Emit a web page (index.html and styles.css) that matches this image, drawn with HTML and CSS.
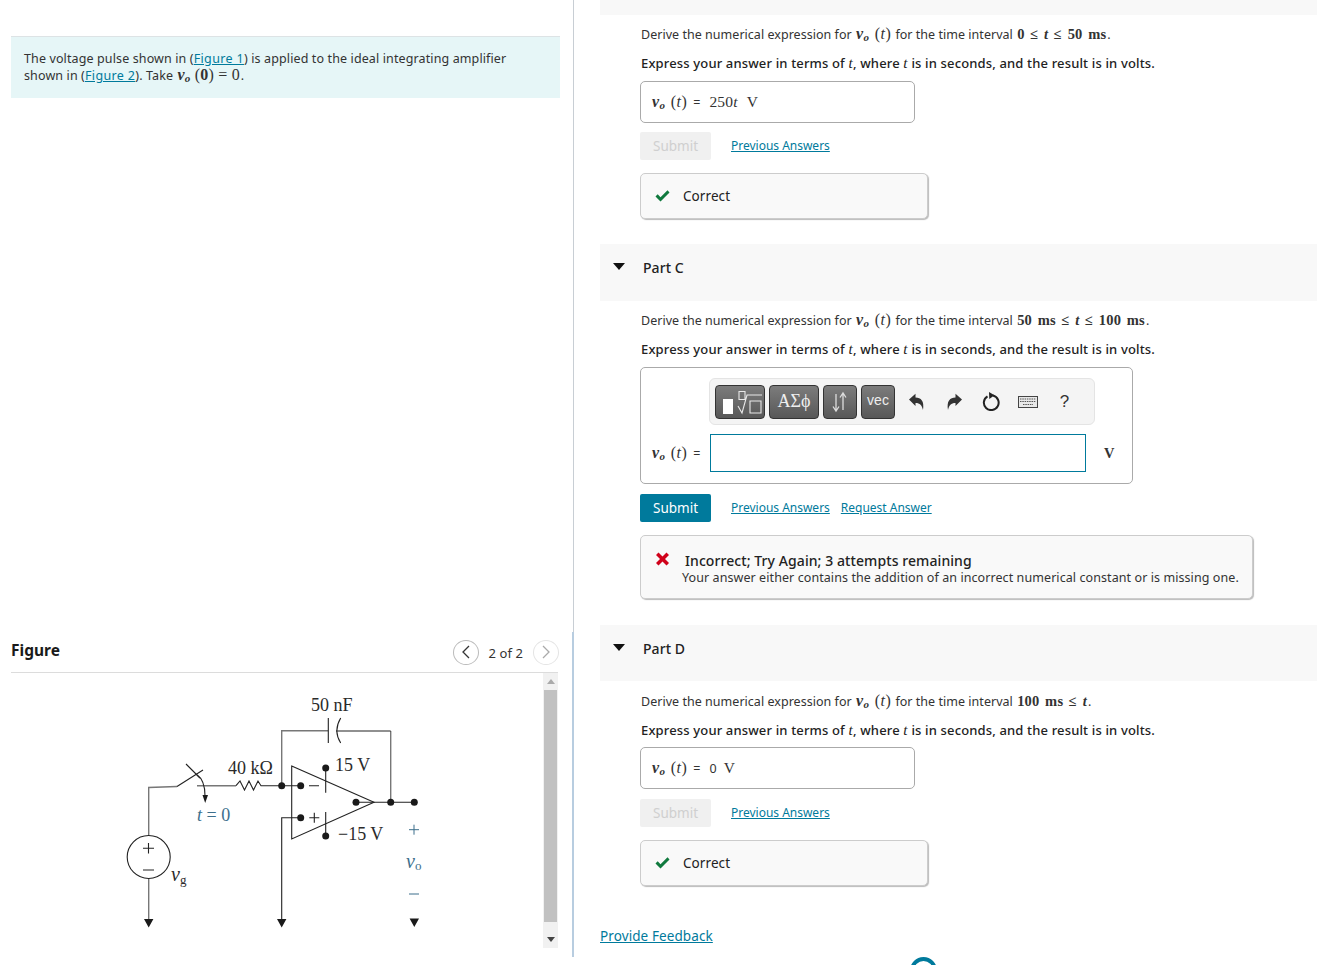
FILE: index.html
```html
<!DOCTYPE html>
<html lang="en">
<head>
<meta charset="utf-8">
<title>Integrating amplifier</title>
<link rel="stylesheet" href="styles.css">
</head>
<body>
<div class="page">
  <aside class="left">
    <div class="statement">
      <div class="intro">The voltage pulse shown in (<a href="#">Figure 1</a>) is applied to the ideal integrating amplifier<br>shown in (<a href="#">Figure 2</a>). Take <span class="m"><i class="v">v<sub>o</sub></i> (<b>0</b>) = 0</span>.</div>
    </div>
    <div class="figure">
      <div class="fig-head">
        <h2>Figure</h2>
        <div class="pager">
          <span class="round"><svg width="10" height="14" viewBox="0 0 10 14"><path d="M8 1 L2 7 L8 13" fill="none" stroke="#333" stroke-width="1.3"/></svg></span>
          <span class="count">2 of 2</span>
          <span class="round off"><svg width="10" height="14" viewBox="0 0 10 14"><path d="M2 1 L8 7 L2 13" fill="none" stroke="#aaa" stroke-width="1.3"/></svg></span>
        </div>
      </div>
      <div class="fig-view">
        <svg class="circuit" width="532" height="275" viewBox="11 673 532 275">
          <g fill="none" stroke="#777" stroke-width="1.4">
            <path d="M148.7 835V787.5L177 786.5"/>
            <path d="M197 785.7H236"/>
            <path d="M281.7 785.7V730.7H328"/>
            <path d="M390.7 802V731"/>
            <path d="M148.7 879V920"/>
          </g>
          <g fill="none" stroke="#222" stroke-width="1.1">
            <path d="M177 786.5L203 770M186 764L200 778"/>
            <path d="M197 775Q205 780 205 796"/>
            <path d="M236 785.7L240 781L244.500 790L249 781L253.500 790L258 781L261 785.700H300.700"/>
            <path d="M328.300 718V743M340.700 718Q333 730.700 340.700 743M336 731H390.700"/>
            <path d="M291.700 766L374 802.300L291.700 839Z"/>
            <path d="M325.700 768V792.700M325.700 812V836"/>
            <path d="M309 785.700H319M309.300 817.700H319.300M314.300 812.700V822.700"/>
            <path d="M356 802.300H414.300"/>
            <path d="M300.700 817.700H281.700V920"/>
            <circle cx="148.700" cy="857" r="21.500"/>
            <path d="M143 848.300H154M148.500 843V853.500M143 870H154"/>
          </g>
          <g fill="#1a1a1a">
            <circle cx="281.700" cy="785.700" r="3.500"/><circle cx="300.700" cy="785.700" r="3.500"/>
            <circle cx="300.700" cy="817.700" r="3.500"/><circle cx="325.700" cy="768" r="3.500"/>
            <circle cx="325.700" cy="836" r="3.500"/><circle cx="356" cy="802.300" r="3.500"/>
            <circle cx="390.700" cy="802.300" r="3.500"/><circle cx="414.300" cy="802.300" r="3.500"/>
            <path d="M144 919H153.400L148.700 927.500ZM277 919H286.400L281.700 927.500ZM409.600 918.500H419L414.300 927ZM202.500 795H208L205.200 803Z"/>
          </g>
          <g class="lab">
            <text x="311" y="711">50 nF</text>
            <text x="228" y="773.500">40 kΩ</text>
            <text x="335" y="771">15 V</text>
            <text x="338" y="839.500">−15 V</text>
            <text x="171" y="881" class="it">v<tspan class="sb" dy="3">g</tspan></text>
          </g>
          <g class="lab blue">
            <text x="197" y="821"><tspan class="it">t</tspan> = 0</text>
            <text x="406" y="868" class="it">v<tspan class="sb" dy="2">o</tspan></text>
          </g>
          <path d="M409 829.700H419M414 824.700V834.700M409 894H419" fill="none" stroke="#3d6f8c" stroke-width="1"/>
        </svg>
        <div class="scrollbar">
          <svg class="arr" width="8" height="5" viewBox="0 0 8 5"><path d="M0 5L4 0L8 5Z" fill="#aaa"/></svg>
          <div class="thumb"></div>
          <svg class="arr" width="8" height="5" viewBox="0 0 8 5"><path d="M0 0L4 5L8 0Z" fill="#444"/></svg>
        </div>
      </div>
    </div>
  </aside>

  <main class="right">
    <div class="band top"></div>
    <section class="body">
      <p class="q first">Derive the numerical expression for <span class="m"><i class="v">v<sub>o</sub></i> (<i>t</i>)</span> for the time interval <span class="m b">0 ≤ <i>t</i> ≤ 50 ms</span>.</p>
      <p class="q strong">Express your answer in terms of <span class="m"><i>t</i></span>, where <span class="m"><i>t</i></span> is in seconds, and the result is in volts.</p>
      <div class="answer"><span class="m"><i class="v">v<sub>o</sub></i> (<i>t</i>)</span><span class="eq">=</span><span class="m val">250<i>t</i></span><span class="m val unit-v">V</span></div>
      <div class="actions"><button class="submit off">Submit</button><a href="#">Previous Answers</a></div>
      <div class="feedback ok"><svg width="15" height="12" viewBox="0 0 15 12"><path d="M.5 6.500L5.500 11.500L14.500 2.500L12.500 .3L5.500 7.300L2.700 4.300Z" fill="#107a3e"/></svg><span>Correct</span></div>
    </section>

    <div class="band part c"><svg width="12" height="7" viewBox="0 0 12 7"><path d="M0 0H12L6 7Z" fill="#111"/></svg><h3>Part C</h3></div>
    <section class="body">
      <p class="q">Derive the numerical expression for <span class="m"><i class="v">v<sub>o</sub></i> (<i>t</i>)</span> for the time interval <span class="m b">50 ms ≤ <i>t</i> ≤ 100 ms</span>.</p>
      <p class="q strong">Express your answer in terms of <span class="m"><i>t</i></span>, where <span class="m"><i>t</i></span> is in seconds, and the result is in volts.</p>
      <div class="editor">
        <div class="toolbar">
          <button class="tb w50"><svg width="48" height="32" viewBox="0 0 48 32"><rect x="7" y="13" width="10" height="15" fill="#fff"/><path d="M23 5.500h6v8h-6zM22 20L26 27L31 9H46M34 15H45V27H34Z" fill="none" stroke="#e8e8e8" stroke-width="1.100"/></svg></button>
          <button class="tb w50 greek">ΑΣϕ</button>
          <button class="tb w34"><svg width="32" height="32" viewBox="0 0 32 32"><path d="M12 8V24M9 20.500L12 25L15 20.500M19 24V8M16 11.500L19 7L22 11.500" fill="none" stroke="#ddd" stroke-width="1.300"/></svg></button>
          <button class="tb w34 vec">vec</button>
          <span class="ti first-ti"><svg width="18" height="18" viewBox="0 0 18 18"><path d="M1 6.500L7.500 .8V4.500C13 4.500 16.500 8 15 17C14 12.500 12 10 7.500 10V13Z" fill="#333"/></svg></span>
          <span class="ti"><svg width="18" height="18" viewBox="0 0 18 18"><path d="M17 6.500L10.500 .8V4.500C5 4.500 1.500 8 3 17C4 12.500 6 10 10.500 10V13Z" fill="#333"/></svg></span>
          <span class="ti"><svg width="18" height="19" viewBox="0 0 18 19"><path d="M11 3.500A7.400 7.400 0 1 1 5.500 4.300" fill="none" stroke="#222" stroke-width="2"/><path d="M7 0L12.500 3.300L7.300 7Z" fill="#222"/></svg></span>
          <span class="ti"><svg width="20" height="12" viewBox="0 0 20 12"><rect x=".5" y=".5" width="19" height="11" fill="#e8e8e8" stroke="#444"/><path d="M2 3H18M2 5.500H18M5 8.500H15" stroke="#555" stroke-width="1.200" stroke-dasharray="1.500 .8"/></svg></span>
          <span class="ti help">?</span>
        </div>
        <div class="eq-row">
          <span class="eq-label"><span class="m"><i class="v">v<sub>o</sub></i> (<i>t</i>)</span><span class="eq">=</span></span>
          <input class="eq-input" type="text" aria-label="answer">
          <span class="m b unit">V</span>
        </div>
      </div>
      <div class="actions low"><button class="submit">Submit</button><a href="#">Previous Answers</a><a href="#" class="second">Request Answer</a></div>
      <div class="feedback bad">
        <svg width="15" height="14" viewBox="0 0 15 14"><path d="M1 3L3.500 .5L7.500 4.500L11.500 .5L14 3L10 7L14 11L11.500 13.500L7.500 9.500L3.500 13.500L1 11L5 7Z" fill="#d0021b"/></svg>
        <div><div class="bad-title">Incorrect; Try Again; 3 attempts remaining</div><div class="bad-text">Your answer either contains the addition of an incorrect numerical constant or is missing one.</div></div>
      </div>
    </section>

    <div class="band part d"><svg width="12" height="7" viewBox="0 0 12 7"><path d="M0 0H12L6 7Z" fill="#111"/></svg><h3>Part D</h3></div>
    <section class="body">
      <p class="q first">Derive the numerical expression for <span class="m"><i class="v">v<sub>o</sub></i> (<i>t</i>)</span> for the time interval <span class="m b">100 ms ≤ <i>t</i></span>.</p>
      <p class="q strong">Express your answer in terms of <span class="m"><i>t</i></span>, where <span class="m"><i>t</i></span> is in seconds, and the result is in volts.</p>
      <div class="answer tight"><span class="m"><i class="v">v<sub>o</sub></i> (<i>t</i>)</span><span class="eq">=</span><span class="zero">0</span><span class="m val unit-z">V</span></div>
      <div class="actions low"><button class="submit off">Submit</button><a href="#">Previous Answers</a></div>
      <div class="feedback ok"><svg width="15" height="12" viewBox="0 0 15 12"><path d="M.5 6.500L5.500 11.500L14.500 2.500L12.500 .3L5.500 7.300L2.700 4.300Z" fill="#107a3e"/></svg><span>Correct</span></div>
    </section>
    <a href="#" class="provide">Provide Feedback</a>
    <div class="fab"></div>
  </main>
</div>
</body>
</html>
```
FILE: styles.css
```css
* { box-sizing: border-box; }
html, body { margin: 0; padding: 0; }
body { background: #fff; color: #333; font-family: "Noto Sans", "Open Sans", sans-serif; font-size: 12.5px; letter-spacing: .08px; }
a { color: #007a9c; text-decoration: underline; }
p { margin: 0; }
button { font-family: inherit; }

.page { display: flex; width: 1317px; height: 965px; overflow: hidden; }

.left { width: 574px; flex: none; height: 957px; display: flex; flex-direction: column; }
.statement { height: 632px; padding: 36px 13px 0 11px; border-right: 1px solid #c8ced4; }
.intro { height: 62px; background: #e6f6f7; border-top: 1px solid #dde3e5; padding: 13px 13px 0; line-height: 17px; letter-spacing: .12px; }
.intro a { letter-spacing: .35px; }
.intro .m { line-height: 1; word-spacing: 0; letter-spacing: .2px; }
.figure { flex: 1; padding: 0 14px 0 11px; border-right: 2px solid #b8cde0; }
.fig-head { height: 41px; border-bottom: 1px solid #dcdcdc; display: flex; align-items: center; justify-content: space-between; }
.fig-head h2 { margin: -4px 0 0; font-size: 15.5px; font-weight: 700; letter-spacing: 0; color: #1a1a1a; }
.pager { display: flex; align-items: center; gap: 10px; margin-right: -1px; }
.round { width: 26px; height: 25px; border: 1px solid #bbb; border-radius: 50%; display: flex; align-items: center; justify-content: center; }
.round.off { border-color: #e4e4e4; }
.count { font-size: 13px; margin-top: 2px; }
.fig-view { display: flex; height: 275px; }
.circuit { display: block; flex: none; }
.scrollbar { width: 16px; background: #f1f1f1; display: flex; flex-direction: column; align-items: center; }
.arr { margin: 6px 0; flex: none; }
.thumb { width: 13px; flex: 1; background: #c1c1c1; margin: 0 0 9px; }
.lab text { font-family: "Liberation Serif", serif; font-size: 18px; letter-spacing: 0; fill: #2a2a2a; }
.lab.blue text { fill: #3d6f8c; }
.lab text.it, .lab tspan.it { font-style: italic; }
.lab text.it { font-size: 20px; }
.lab .sb { font-size: 13px; font-style: normal; }

.right { flex: 1; padding-left: 26px; position: relative; height: 965px; }
.band { background: #f8f8f8; }
.band.top { height: 15px; margin-bottom: -1px; }
.part { display: flex; align-items: center; padding: 0 0 10px 13px; gap: 18px; }
.part h3 { margin: 0; font-size: 14px; font-weight: 500; color: #222; }
.part svg { margin-top: -2px; }
.part.c { height: 57px; margin-top: 25px; }
.part.d { height: 56px; margin-top: 26px; }
.body { padding-left: 40px; }
.q { height: 20px; line-height: 20px; padding-left: 1px; margin-top: 9px; white-space: nowrap; letter-spacing: .03px; }
.q.first { margin-top: 10px; }
.q.strong { font-weight: 500; font-size: 13px; letter-spacing: .15px; color: #222; }
.m { font-family: "Liberation Serif", serif; font-size: 16px; letter-spacing: .4px; word-spacing: 1px; padding: 0 1px; }
.m.b { font-weight: 700; font-size: 14.5px; letter-spacing: .2px; word-spacing: 1.8px; }
.q.strong .m { font-size: 15px; padding: 0; }
.v { font-weight: 700; }
.m sub { font-size: 11px; vertical-align: -2px; line-height: 0; }
.eq { margin-left: 5px; font-size: 12.5px; }
.val { font-size: 15.5px; letter-spacing: .2px; }
.answer { width: 275px; height: 42px; margin-top: 8px; border: 1px solid #aaa; border-radius: 5px; padding-left: 10px; display: flex; align-items: center; white-space: pre; }
.answer .val { margin-left: 8px; }
.answer .unit-v { margin-left: 7px; }
.zero { margin-left: 9px; }
.answer .unit-z { margin-left: 6px; }
.answer.tight { margin-top: 7px; }
.actions { display: flex; align-items: center; height: 28px; margin-top: 9px; }
.actions a { margin-left: 20px; margin-top: -2px; font-size: 12px; letter-spacing: -.01px; }
.actions a.second { margin-left: 11px; }
.actions.low { margin-top: 10px; }
.submit { width: 71px; height: 28px; border: 0; border-radius: 2px; background: #007a9c; color: #fff; font-size: 13.5px; padding: 0; }
.submit.off { background: #f0f0f0; color: #cfcfcf; }
.feedback { margin-top: 13px; border: 1px solid #ccc; border-radius: 5px; background: #f9f9f9; box-shadow: 1px 1px 1px #bbb; display: flex; }
.feedback.ok { width: 288px; height: 46px; align-items: center; padding-left: 14px; gap: 13px; font-size: 13.5px; color: #222; }
.feedback.bad { width: 613px; height: 64px; padding: 16px 0 0 14px; gap: 15px; }
.feedback.bad svg { flex: none; }
.bad-title { font-size: 14px; font-weight: 500; color: #222; line-height: 18px; }
.bad-text { line-height: 15px; margin-left: -3px; }
.editor { width: 493px; height: 117px; margin-top: 8px; border: 1px solid #aaa; border-radius: 5px; padding-top: 10px; }
.toolbar { width: 386px; height: 47px; margin-left: 68px; background: #f4f4f4; border: 1px solid #e4e4e4; border-radius: 6px; display: flex; align-items: center; gap: 4px; padding-left: 5px; }
.tb { height: 34px; padding: 0; border: 1px solid #333; border-radius: 4px; background: linear-gradient(#7c7c7c, #585858); color: #eee; display: flex; align-items: center; justify-content: center; }
.w50 { width: 50px; }
.w34 { width: 34px; }
.greek { font-family: "Liberation Serif", serif; font-size: 18px; }
.vec { font-family: "Liberation Sans", sans-serif; font-size: 14px; padding-bottom: 4px; }
.ti { width: 37px; margin-left: -4px; height: 34px; display: flex; align-items: center; justify-content: center; color: #333; }
.ti.first-ti { margin-left: -1px; }
.help { font-family: "Liberation Sans", sans-serif; font-size: 17px; }
.eq-row { display: flex; align-items: center; margin-top: 9px; height: 38px; padding-left: 10px; }
.eq-label { width: 59px; flex: none; white-space: nowrap; }
.eq-input { width: 376px; height: 38px; border: 1px solid #007a9c; background: #fff; padding: 0; margin: 0; outline: 0; }
.unit { margin-left: 17px; }
.provide { display: block; margin-top: 40px; line-height: 20px; font-size: 13.5px; letter-spacing: .1px; width: max-content; }
.fab { position: absolute; left: 336px; top: 957px; width: 27px; height: 27px; border: 4px solid #007a9c; border-radius: 50%; }
```
